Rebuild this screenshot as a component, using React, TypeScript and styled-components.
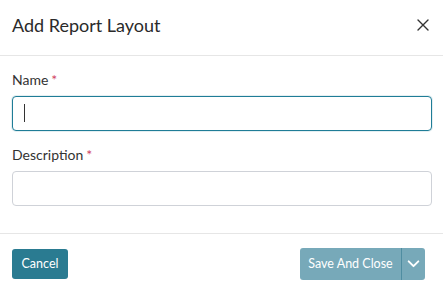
import React from 'react';
import styled, { createGlobalStyle } from 'styled-components';

const GlobalStyle = createGlobalStyle`
  html, body {
    margin: 0;
    padding: 0;
    background: #ffffff;
  }
  body {
    font-family: Lato, "Noto Sans", "Liberation Sans", sans-serif;
    color: #333333;
  }
  * {
    box-sizing: border-box;
  }
`;

const Dialog = styled.div`
  width: 443px;
  height: 292px;
  background: #ffffff;
  display: flex;
  flex-direction: column;
`;

const Header = styled.div`
  height: 56px;
  padding: 0 12px;
  display: flex;
  align-items: center;
  justify-content: space-between;
  border-bottom: 1px solid #e6e6e6;
`;

const Title = styled.h1`
  margin: 0;
  font-size: 18px;
  font-weight: 400;
  color: #2a2a2a;
  padding-bottom: 6px;
`;

const CloseButton = styled.button`
  border: none;
  background: none;
  padding: 0;
  margin-right: 1px;
  margin-bottom: 6px;
  width: 14px;
  height: 14px;
  display: flex;
  align-items: center;
  justify-content: center;
  cursor: pointer;
  color: #333333;
`;

const Body = styled.div`
  padding: 15px 11px 0 12px;
  display: flex;
  flex-direction: column;
  height: 178px;
  border-bottom: 1px solid #e6e6e6;
`;

const Field = styled.div`
  display: flex;
  flex-direction: column;
  margin-bottom: 15px;
`;

const Label = styled.label`
  font-size: 14px;
  color: #333333;
  line-height: 18px;
  margin-bottom: 7px;
`;

const Required = styled.span`
  color: #d0455f;
  margin-left: 3px;
`;

const InputWrap = styled.div`
  position: relative;
`;

const TextInput = styled.input<{ $focused?: boolean }>`
  width: 100%;
  height: 35px;
  border-radius: 4px;
  border: 1px solid ${(p) => (p.$focused ? '#1f7d97' : '#cfd2d8')};
  box-shadow: ${(p) => (p.$focused ? '0 0 0 1px rgba(31, 125, 151, 0.12)' : 'none')};
  outline: none;
  padding: 0 10px;
  font-size: 14px;
  font-family: inherit;
  caret-color: transparent;
`;

const Caret = styled.span`
  position: absolute;
  left: 12px;
  top: 8px;
  width: 1px;
  height: 18px;
  background: #333333;
`;

const Footer = styled.div`
  flex: 1;
  padding: 0 18px 0 12px;
  display: flex;
  align-items: center;
  justify-content: space-between;
`;

const CancelButton = styled.button`
  height: 30px;
  width: 56px;
  padding: 0;
  border: none;
  border-radius: 3px;
  background: #2a7b91;
  color: #ffffff;
  font-family: inherit;
  font-size: 12.5px;
  cursor: pointer;
  margin-top: 1px;
`;

const SplitButton = styled.div`
  display: flex;
  height: 32px;
  border-radius: 3px;
  overflow: hidden;
  background: #77a9b9;
  margin-top: 1px;
`;

const SplitMain = styled.button`
  border: none;
  background: transparent;
  color: #ffffff;
  font-family: inherit;
  font-size: 12.5px;
  width: 102px;
  padding: 0;
  border-right: 1px solid #4f8da1;
  cursor: default;
`;

const SplitToggle = styled.button`
  border: none;
  background: transparent;
  width: 23px;
  display: flex;
  align-items: center;
  justify-content: center;
  padding: 0;
  cursor: default;
`;

const App = () => (
  <>
    <GlobalStyle />
    <Dialog>
      <Header>
        <Title>Add Report Layout</Title>
        <CloseButton aria-label="Close">
          <svg width="12" height="12" viewBox="0 0 12 12">
            <path d="M1 1 L11 11 M11 1 L1 11" stroke="#333" strokeWidth="1.4" strokeLinecap="round" />
          </svg>
        </CloseButton>
      </Header>
      <Body>
        <Field>
          <Label>
            Name<Required>*</Required>
          </Label>
          <InputWrap>
            <TextInput $focused />
            <Caret />
          </InputWrap>
        </Field>
        <Field>
          <Label>
            Description<Required>*</Required>
          </Label>
          <TextInput />
        </Field>
      </Body>
      <Footer>
        <CancelButton>Cancel</CancelButton>
        <SplitButton>
          <SplitMain disabled>Save And Close</SplitMain>
          <SplitToggle disabled aria-label="More">
            <svg width="15" height="15" viewBox="0 0 14 14">
              <path d="M2.5 5 L7 9.5 L11.5 5" fill="none" stroke="#ffffff" strokeWidth="1.8" strokeLinecap="round" strokeLinejoin="round" />
            </svg>
          </SplitToggle>
        </SplitButton>
      </Footer>
    </Dialog>
  </>
);

export default App;
